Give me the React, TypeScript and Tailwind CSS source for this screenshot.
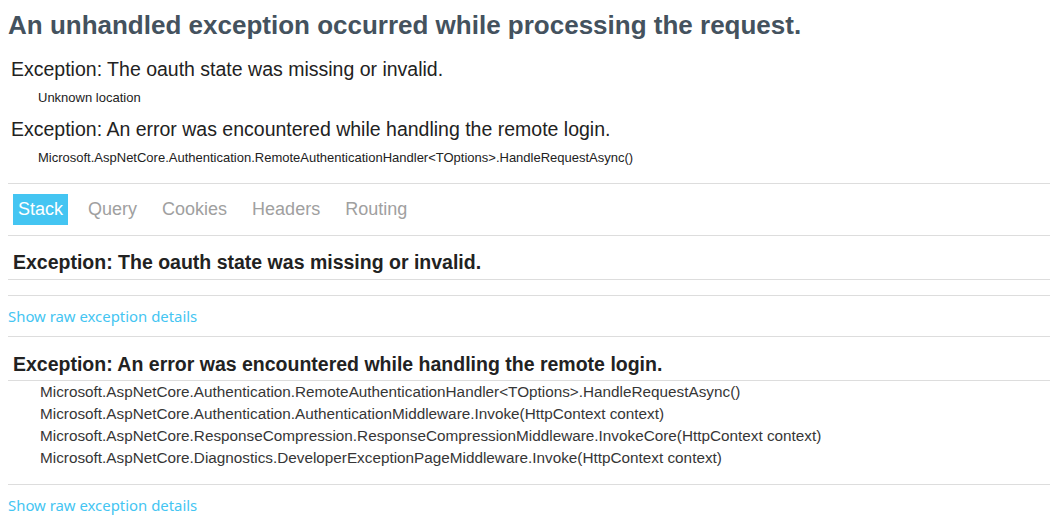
import React from 'react';

const frames = [
    'Microsoft.AspNetCore.Authentication.RemoteAuthenticationHandler<TOptions>.HandleRequestAsync()',
    'Microsoft.AspNetCore.Authentication.AuthenticationMiddleware.Invoke(HttpContext context)',
    'Microsoft.AspNetCore.ResponseCompression.ResponseCompressionMiddleware.InvokeCore(HttpContext context)',
    'Microsoft.AspNetCore.Diagnostics.DeveloperExceptionPageMiddleware.Invoke(HttpContext context)',
];

const tabs = ['Stack', 'Query', 'Cookies', 'Headers', 'Routing'];

const RawLink: React.FC = () => (
    <button className="block text-left text-[14.9px] leading-[20px] text-[#44c5f2] font-['Noto_Sans',sans-serif] bg-transparent border-0 p-0 cursor-pointer">
        Show raw exception details
    </button>
);

const App: React.FC = () => {
    return (
        <div className="pl-2 bg-white text-[#222] text-[13px] font-['Liberation_Sans',Arial,sans-serif] min-h-screen">
            <h1 className="pt-[10px] text-[26px] leading-[30px] font-bold text-[#44525e]">
                An unhandled exception occurred while processing the request.
            </h1>

            <div className="mt-[18px] px-[3px] text-[19.5px] leading-[22px]">Exception: The oauth state was missing or invalid.</div>
            <div className="mt-[10px] ml-[30px] leading-[15px]">Unknown location</div>

            <div className="mt-[13px] px-[3px] text-[19.5px] leading-[22px]">Exception: An error was encountered while handling the remote login.</div>
            <div className="mt-[10px] ml-[30px] leading-[15px]">Microsoft.AspNetCore.Authentication.RemoteAuthenticationHandler&lt;TOptions&gt;.HandleRequestAsync()</div>

            <ul className="mt-[18px] flex gap-[15px] border-y border-[#ddd] py-[10px] pl-[5px] text-[18px] leading-[21px] text-[#a0a0a0]">
                {tabs.map((t, i) => (
                    <li key={t} className={`px-[5px] py-[5px] ${i === 0 ? 'bg-[#44c5f2] text-white' : ''}`}>{t}</li>
                ))}
            </ul>

            <h2 className="mt-[15px] px-[5px] pb-[6px] text-[19.5px] leading-[22px] font-bold border-b border-[#ddd]">
                Exception: The oauth state was missing or invalid.
            </h2>
            <div className="mt-[15px] border-y border-[#ddd] py-[10px]">
                <RawLink />
            </div>

            <h2 className="mt-[16px] px-[5px] pb-[5px] text-[19.5px] leading-[22px] font-bold border-b border-[#ddd]">
                Exception: An error was encountered while handling the remote login.
            </h2>
            <ul className="ml-[30px]">
                {frames.map((f) => (
                    <li key={f} className="p-[2px] text-[15.3px] leading-[18px] text-[#363636]">{f}</li>
                ))}
            </ul>
            <div className="mt-[15px] border-t border-[#ddd] py-[10px]">
                <RawLink />
            </div>
        </div>
    );
};

export default App;
